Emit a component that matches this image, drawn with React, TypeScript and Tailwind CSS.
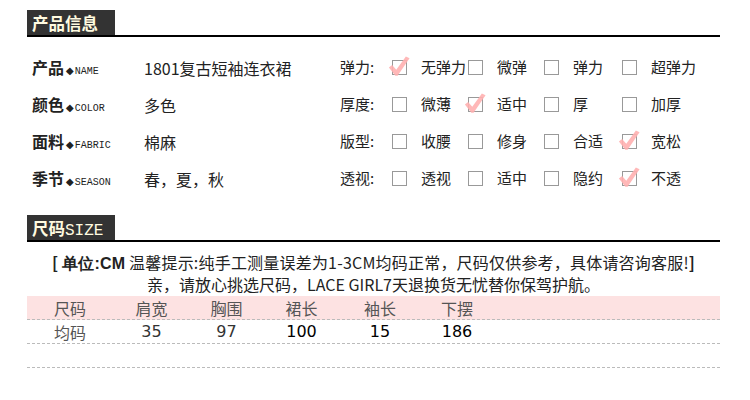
import React from "react";

const CJK = "font-['Noto_Sans_CJK_SC',sans-serif]";

function Check() {
  return (
    <svg
      className="absolute left-[-5px] top-[-6px]"
      width="22"
      height="22"
      viewBox="0 0 24 24"
    >
      <path
        d="M1 13.5 L4.5 11 L9 16 L19.5 1.5 L23.5 3.5 L10.5 22.5 L8 22.5 Z"
        fill="#ffb0b0"
        fillOpacity="0.9"
      />
    </svg>
  );
}

function Box({ checked }: { checked?: boolean }) {
  return (
    <span className="relative inline-block w-[15px] h-[15px] border border-[#999] bg-white shrink-0">
      {checked && <Check />}
    </span>
  );
}

type Opt = { label: string; checked?: boolean };

function Options({ title, opts }: { title: string; opts: Opt[] }) {
  const widths = ["w-[76px]", "w-[76px]", "w-[78px]", "w-[80px]"];
  return (
    <div className="flex items-center text-[15px] text-[#222]">
      <div className="w-[52px]">{title}:</div>
      {opts.map((o, i) => (
        <div key={i} className={`flex items-center ${widths[i]}`}>
          <Box checked={o.checked} />
          <span className="ml-[14px] whitespace-nowrap">{o.label}</span>
        </div>
      ))}
    </div>
  );
}

function Row({
  label,
  en,
  value,
  title,
  opts,
}: {
  label: string;
  en: string;
  value: string;
  title: string;
  opts: Opt[];
}) {
  return (
    <div className="flex items-center h-[37px]">
      <div className="w-[117px] pl-[5px] flex items-baseline leading-none">
        <span className="font-bold text-[16px] text-[#222]">{label}</span>
        <span className="ml-[2px] text-[10px] text-[#222] font-['DejaVu_Sans',sans-serif]">◆</span>
        <span className="ml-[1px] text-[10px] text-[#222] font-['Liberation_Mono',monospace]">
          {en}
        </span>
      </div>
      <div className="w-[196px] text-[16px] text-[#222]">{value}</div>
      <Options title={title} opts={opts} />
    </div>
  );
}

function SectionHeader({ children }: { children: React.ReactNode }) {
  return (
    <div className="border-b-2 border-black">
      <div className="w-[88px] h-[25px] bg-[#333] text-[#fffbe0] pl-[5px] flex items-baseline pt-[5px] text-[16.5px] font-bold leading-none">
        {children}
      </div>
    </div>
  );
}

const cols = ["w-[86px]", "w-[77px]", "w-[73px]", "w-[77px]", "w-[80px]", "w-[74px]"];

export default function App() {
  return (
    <div className={`w-[750px] h-[400px] bg-white pt-[10px] pl-[27px] pr-[30px] ${CJK}`}>
      <SectionHeader>产品信息</SectionHeader>
      <div className="mt-[12px]">
        <Row
          label="产品"
          en="NAME"
          value="1801复古短袖连衣裙"
          title="弹力"
          opts={[
            { label: "无弹力", checked: true },
            { label: "微弹" },
            { label: "弹力" },
            { label: "超弹力" },
          ]}
        />
        <Row
          label="颜色"
          en="COLOR"
          value="多色"
          title="厚度"
          opts={[
            { label: "微薄" },
            { label: "适中", checked: true },
            { label: "厚" },
            { label: "加厚" },
          ]}
        />
        <Row
          label="面料"
          en="FABRIC"
          value="棉麻"
          title="版型"
          opts={[
            { label: "收腰" },
            { label: "修身" },
            { label: "合适" },
            { label: "宽松", checked: true },
          ]}
        />
        <Row
          label="季节"
          en="SEASON"
          value="春，夏，秋"
          title="透视"
          opts={[
            { label: "透视" },
            { label: "适中" },
            { label: "隐约" },
            { label: "不透", checked: true },
          ]}
        />
      </div>
      <div className="mt-[18px]">
        <SectionHeader>
          <span>尺码</span>
          <span className="font-normal font-['Liberation_Mono',monospace] text-[16px]">SIZE</span>
        </SectionHeader>
      </div>
      <div className="mt-[10px] text-center text-[16px] leading-[21px] text-[#222]">
        <div className="whitespace-nowrap tracking-[0.2px]">
          <span className="font-bold">[ </span>
          <span className="font-bold font-['Liberation_Sans',sans-serif]">单位:CM</span>
          <span> 温馨提示:纯手工测量误差为1-3CM均码正常，尺码仅供参考，具体请咨询客服!</span>
          <span className="font-bold">]</span>
        </div>
        <div className="whitespace-nowrap">亲，请放心挑选尺码，LACE GIRL7天退换货无忧替你保驾护航。</div>
      </div>
      <div className="mt-[1px]">
        <div className="flex h-[24px] items-center bg-[#fde2e2] border-b border-dashed border-[#bbb] text-[16px] text-[#555]">
          {["尺码", "肩宽", "胸围", "裙长", "袖长", "下摆"].map((t, i) => (
            <div key={i} className={`${cols[i]} text-center`}>
              {t}
            </div>
          ))}
        </div>
        <div className="flex h-[24px] items-center border-b border-dashed border-[#bbb]">
          <div className={`${cols[0]} text-center text-[16px] text-[#555]`}>均码</div>
          {["35", "97", "100", "15", "186"].map((t, i) => (
            <div
              key={i}
              className={`${cols[i + 1]} text-center text-[16px] font-['DejaVu_Sans',sans-serif] ${
                i < 2 ? "text-[#333]" : "text-black"
              }`}
            >
              {t}
            </div>
          ))}
        </div>
        <div className="h-[24px] border-b border-dashed border-[#bbb]" />
      </div>
    </div>
  );
}
